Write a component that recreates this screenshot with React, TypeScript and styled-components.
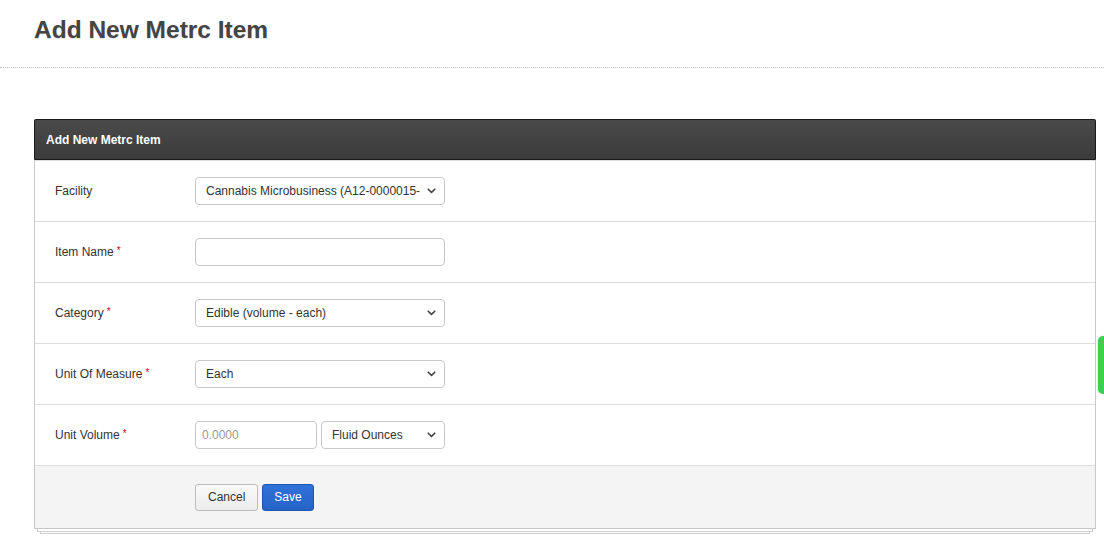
import React from "react";
import styled, { createGlobalStyle } from "styled-components";

const Global = createGlobalStyle`
  html, body { margin: 0; padding: 0; background: #fff; }
  body { font-family: "Liberation Sans", Arial, Helvetica, sans-serif; color: #333; }
  * { box-sizing: border-box; }
`;

const Page = styled.div`
  position: relative;
  width: 1104px;
  height: 546px;
  overflow: hidden;
`;

const TitleBar = styled.div`
  height: 68px;
  padding: 16px 34px 0;
  border-bottom: 1px dotted #bdbdbd;
`;

const Title = styled.h1`
  margin: 0;
  font-size: 24.5px;
  line-height: 28px;
  font-weight: 700;
  color: #444;
  text-shadow: 0 1px 1px rgba(0, 0, 0, 0.12);
`;

const Content = styled.div`
  padding: 51px 8px 0 34px;
`;

const PanelStack = styled.div`
  position: relative;
  padding-bottom: 5px;
`;

const Layer = styled.div<{ $inset: number; $bottom: number }>`
  position: absolute;
  left: ${(p) => p.$inset}px;
  right: ${(p) => p.$inset}px;
  bottom: ${(p) => p.$bottom}px;
  height: 20px;
  border: 1px solid #cfcfcf;
  border-top: none;
  background: #fff;
`;

const Panel = styled.div`
  position: relative;
  border: 1px solid #c8c8c8;
  border-top: none;
  background: #fff;
`;

const PanelHeader = styled.div`
  height: 41px;
  display: flex;
  align-items: center;
  padding: 0 11px;
  background: linear-gradient(#4a4a4a, #3b3b3b);
  border: 1px solid #1a1a1a;
  margin: 0 -1px;
  border-radius: 2px 2px 0 0;
  color: #fff;
  font-size: 12px;
  font-weight: 700;
`;

const Row = styled.div`
  display: grid;
  grid-template-columns: 140px 250px;
  align-items: center;
  height: 61px;
  padding-left: 20px;
  border-top: 1px solid #dcdcdc;
  &:first-of-type { border-top: none; }
`;

const Label = styled.label`
  font-size: 12px;
  color: #333;
`;

const Req = styled.span`
  color: #d0021b;
  margin-left: 3px;
  font-size: 10px;
  vertical-align: 2px;
`;

const fieldBase = `
  height: 28px;
  border: 1px solid #c9c9c9;
  border-radius: 4px;
  background: #fff;
  font-family: "Liberation Sans", Arial, sans-serif;
  font-size: 12px;
  color: #333;
`;

const TextInput = styled.input<{ $w?: number }>`
  ${fieldBase}
  width: ${(p) => p.$w ?? 250}px;
  padding: 0 6px;
  outline: none;
  &::placeholder { color: #999; }
`;

const SelectBox = styled.div<{ $w?: number }>`
  ${fieldBase}
  width: ${(p) => p.$w ?? 250}px;
  display: flex;
  align-items: center;
  justify-content: space-between;
  padding: 0 8px 0 10px;
  white-space: nowrap;
  overflow: hidden;
`;

const SelectText = styled.span`
  overflow: hidden;
`;

const Pair = styled.div`
  display: flex;
  gap: 4px;
`;

const Footer = styled.div`
  height: 63px;
  background: #f4f4f4;
  border-top: 1px solid #dcdcdc;
  display: flex;
  align-items: center;
  gap: 4px;
  padding-left: 160px;
`;

const Button = styled.button<{ $primary?: boolean }>`
  height: 27px;
  padding: 0 ${(p) => (p.$primary ? 11 : 12)}px;
  border-radius: 3px;
  font-family: "Liberation Sans", Arial, sans-serif;
  font-size: 12px;
  border: 1px solid ${(p) => (p.$primary ? "#1f56b0" : "#bdbdbd")};
  color: ${(p) => (p.$primary ? "#fff" : "#333")};
  background: ${(p) =>
    p.$primary ? "linear-gradient(#2f72d8, #2562c6)" : "linear-gradient(#fafafa, #ececec)"};
`;

const GreenTab = styled.div`
  position: absolute;
  right: -6px;
  top: 336px;
  width: 12px;
  height: 58px;
  border-radius: 5px;
  background: #3fcf4f;
  box-shadow: -1px 0 2px rgba(0, 0, 0, 0.1);
`;

const Chevron = () => (
  <svg width="9" height="6" viewBox="0 0 9 6">
    <path d="M1.2 1.2 L4.5 4.4 L7.8 1.2" fill="none" stroke="#444" strokeWidth="1.6" strokeLinecap="round" strokeLinejoin="round" />
  </svg>
);

const Select = ({ value, w }: { value: string; w?: number }) => (
  <SelectBox $w={w}>
    <SelectText>{value}</SelectText>
    <Chevron />
  </SelectBox>
);

export default function App() {
  return (
    <Page>
      <Global />
      <TitleBar>
        <Title>Add New Metrc Item</Title>
      </TitleBar>
      <Content>
        <PanelStack>
          <Layer $inset={6} $bottom={0} />
          <Layer $inset={3} $bottom={2} />
          <Panel>
            <PanelHeader>Add New Metrc Item</PanelHeader>
            <Row>
              <Label>Facility</Label>
              <Select value="Cannabis Microbusiness (A12-0000015-" />
            </Row>
            <Row>
              <Label>Item Name<Req>*</Req></Label>
              <TextInput />
            </Row>
            <Row>
              <Label>Category<Req>*</Req></Label>
              <Select value="Edible (volume - each)" />
            </Row>
            <Row>
              <Label>Unit Of Measure<Req>*</Req></Label>
              <Select value="Each" />
            </Row>
            <Row>
              <Label>Unit Volume<Req>*</Req></Label>
              <Pair>
                <TextInput $w={122} placeholder="0.0000" />
                <Select w={124} value="Fluid Ounces" />
              </Pair>
            </Row>
            <Footer>
              <Button>Cancel</Button>
              <Button $primary>Save</Button>
            </Footer>
          </Panel>
        </PanelStack>
      </Content>
      <GreenTab />
    </Page>
  );
}
